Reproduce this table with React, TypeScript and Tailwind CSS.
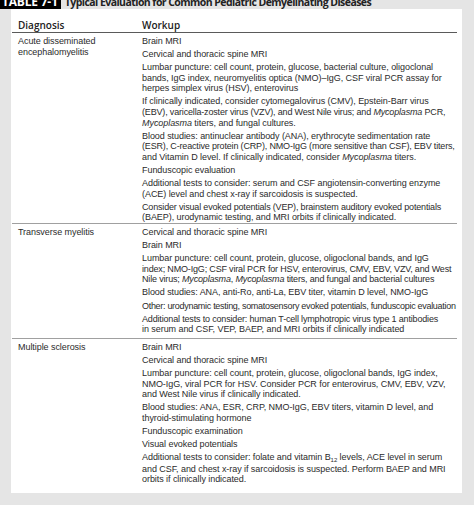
import type { ReactNode } from 'react';

type Row = {
  diagnosis: string[];
  items: ReactNode[][];
};

const I = ({ children }: { children: ReactNode }) => <i>{children}</i>;
const T = ({ children }: { children: ReactNode }) => (
  <span className="tracking-[-0.17px]">{children}</span>
);

const rows: Row[] = [
  {
    diagnosis: ['Acute disseminated', 'encephalomyelitis'],
    items: [
      ['Brain MRI'],
      ['Cervical and thoracic spine MRI'],
      [
        'Lumbar puncture: cell count, protein, glucose, bacterial culture, oligoclonal',
        'bands, IgG index, neuromyelitis optica (NMO)–IgG, CSF viral PCR assay for',
        'herpes simplex virus (HSV), enterovirus',
      ],
      [
        'If clinically indicated, consider cytomegalovirus (CMV), Epstein-Barr virus',
        <T>(EBV), varicella-zoster virus (VZV), and West Nile virus; and <I>Mycoplasma</I> PCR,</T>,
        <><I>Mycoplasma</I> titers, and fungal cultures.</>,
      ],
      [
        'Blood studies: antinuclear antibody (ANA), erythrocyte sedimentation rate',
        <T>(ESR), C-reactive protein (CRP), NMO-IgG (more sensitive than CSF), EBV titers,</T>,
        <>and Vitamin D level. If clinically indicated, consider <I>Mycoplasma</I> titers.</>,
      ],
      ['Funduscopic evaluation'],
      [
        'Additional tests to consider: serum and CSF angiotensin-converting enzyme',
        '(ACE) level and chest x-ray if sarcoidosis is suspected.',
      ],
      [
        <T>Consider visual evoked potentials (VEP), brainstem auditory evoked potentials</T>,
        '(BAEP), urodynamic testing, and MRI orbits if clinically indicated.',
      ],
    ],
  },
  {
    diagnosis: ['Transverse myelitis'],
    items: [
      ['Cervical and thoracic spine MRI'],
      ['Brain MRI'],
      [
        'Lumbar puncture: cell count, protein, glucose, oligoclonal bands, and IgG',
        <T>index; NMO-IgG; CSF viral PCR for HSV, enterovirus, CMV, EBV, VZV, and West</T>,
        <T>Nile virus; <I>Mycoplasma</I>, <I>Mycoplasma</I> titers, and fungal and bacterial cultures</T>,
      ],
      ['Blood studies: ANA, anti-Ro, anti-La, EBV titer, vitamin D level, NMO-IgG'],
      [
        <span className="tracking-[-0.3px]">
          Other: urodynamic testing, somatosensory evoked potentials, funduscopic evaluation
        </span>,
      ],
      [
        <T>Additional tests to consider: human T-cell lymphotropic virus type 1 antibodies</T>,
        'in serum and CSF, VEP, BAEP, and MRI orbits if clinically indicated',
      ],
    ],
  },
  {
    diagnosis: ['Multiple sclerosis'],
    items: [
      ['Brain MRI'],
      ['Cervical and thoracic spine MRI'],
      [
        'Lumbar puncture: cell count, protein, glucose, oligoclonal bands, IgG index,',
        'NMO-IgG, viral PCR for HSV. Consider PCR for enterovirus, CMV, EBV, VZV,',
        'and West Nile virus if clinically indicated.',
      ],
      [
        'Blood studies: ANA, ESR, CRP, NMO-IgG, EBV titers, vitamin D level, and',
        'thyroid-stimulating hormone',
      ],
      ['Funduscopic examination'],
      ['Visual evoked potentials'],
      [
        <>
          Additional tests to consider: folate and vitamin B
          <span className="text-[6px] relative top-[1.5px]">12</span> levels, ACE level in serum
        </>,
        'and CSF, and chest x-ray if sarcoidosis is suspected. Perform BAEP and MRI',
        'orbits if clinically indicated.',
      ],
    ],
  },
];

export default function App() {
  return (
    <div className="w-[474px] h-[505px] overflow-hidden bg-[#e5e5e5] text-[#2b2b2b] font-['Liberation_Sans',Arial,sans-serif]">
      {/* title strip, cut off at the top */}
      <div className="h-[9px] flex items-end overflow-hidden font-['Open_Sans',sans-serif]">
        <div className="bg-black text-white font-bold text-[12px] leading-[14px] pl-[2px] pr-[3px] tracking-[-0.2px]">
          TABLE 7-1
        </div>
        <div className="ml-[4px] font-bold text-[10.5px] leading-[13px] tracking-[-0.55px] text-[#222]">
          Typical Evaluation for Common Pediatric Demyelinating Diseases
        </div>
      </div>

      <div className="ml-[11px] w-[451px] h-[484px] bg-white pl-[1px] pr-[5px]">
        <div className="grid grid-cols-[130px_1fr] border-b border-[#5a5a5a] pt-[10px] pb-[1px] text-[10px] leading-[12px] font-semibold text-[#222] font-['Open_Sans',sans-serif]">
          <div className="pl-[6px]">Diagnosis</div>
          <div>Workup</div>
        </div>

        {rows.map((row, i) => (
          <div
            key={i}
            className={`grid grid-cols-[130px_1fr] pt-[3px] ${i === 0 ? 'pb-[0px]' : 'pb-[3px]'} text-[9px] leading-[10.6px] tracking-[-0.06px] ${
              i < rows.length - 1 ? 'border-b border-[#a0a0a0]' : ''
            }`}
          >
            <div className="pl-[6px]">
              {row.diagnosis.map((line, j) => (
                <div key={j} className="whitespace-nowrap">{line}</div>
              ))}
            </div>
            <div className="flex flex-col gap-[2.5px]">
              {row.items.map((item, j) => (
                <div key={j}>
                  {item.map((line, k) => (
                    <div key={k} className="whitespace-nowrap">{line}</div>
                  ))}
                </div>
              ))}
            </div>
          </div>
        ))}
      </div>
    </div>
  );
}
